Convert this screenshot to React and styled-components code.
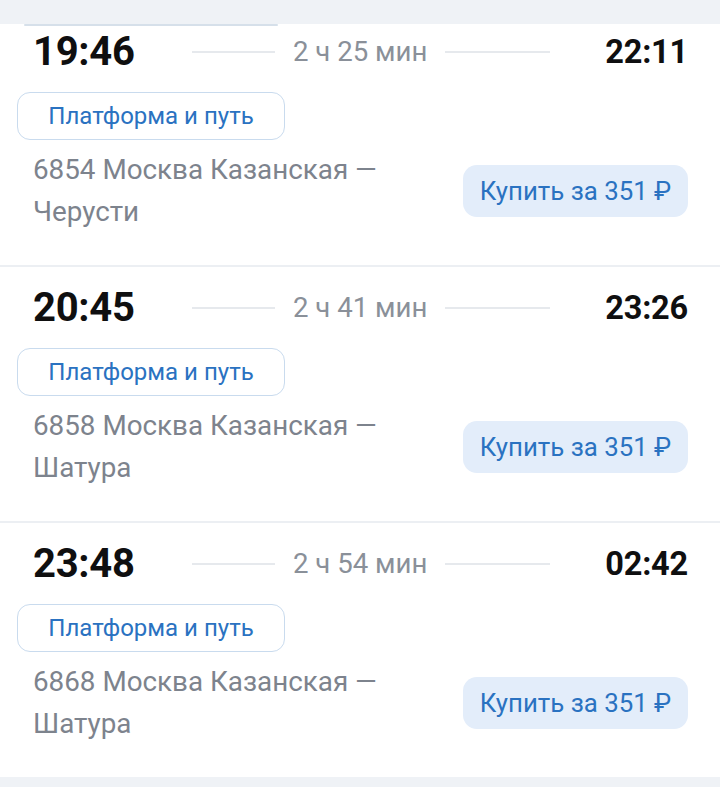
import React from "react";
import styled, { createGlobalStyle } from "styled-components";

const Global = createGlobalStyle`
  html, body { margin: 0; padding: 0; background: #eff2f6; }
  body { font-family: Roboto, "Noto Sans", "Liberation Sans", sans-serif; -webkit-font-smoothing: antialiased; }
  * { box-sizing: border-box; }
`;

const Page = styled.div`
  width: 720px;
  height: 787px;
  overflow: hidden;
  background: #eff2f6;
  display: flex;
  flex-direction: column;
`;

const Header = styled.div`
  position: relative;
  height: 24px;
  flex: none;
  background: #eff2f6;
  z-index: 2;
`;

const HeaderIndicator = styled.div`
  position: absolute;
  left: 24px;
  bottom: -2px;
  width: 254px;
  height: 2px;
  border-radius: 1px;
  background: #d6e0ea;
`;

const List = styled.div`
  display: flex;
  flex-direction: column;
  gap: 2px;
  background: #eceff3;
`;

const Card = styled.div`
  background: #ffffff;
  padding: ${(p) => (p.$cut ? "4px" : "17px")} 32px 32px 0;
  display: flex;
  flex-direction: column;
`;

const TimeRow = styled.div`
  display: flex;
  align-items: center;
  height: 48px;
  padding-left: 33px;
`;

const DepTime = styled.div`
  flex: none;
  width: 159px;
  font-size: 40px;
  line-height: 48px;
  font-weight: 700;
  color: #0f0f10;
  letter-spacing: -0.3px;
`;

const Line = styled.div`
  height: 2px;
  background: #e6e9ed;
  ${(p) => (p.$grow ? "flex: 1;" : "flex: none; width: 83px;")}
`;

const Duration = styled.div`
  flex: none;
  padding: 0 18px;
  font-size: 27.6px;
  line-height: 48px;
  color: #8a9099;
`;

const ArrTime = styled.div`
  flex: none;
  margin-left: 55px;
  font-size: 32.5px;
  line-height: 48px;
  font-weight: 700;
  color: #0f0f10;
  letter-spacing: -0.2px;
`;

const PlatformButton = styled.button`
  margin: 16px 0 0 17px;
  width: 268px;
  height: 48px;
  border: 1.5px solid #c9dbee;
  border-radius: 13px;
  background: #ffffff;
  color: #2a72c1;
  font-family: inherit;
  font-size: 24px;
  padding: 0;
  text-align: center;
  cursor: pointer;
`;

const Bottom = styled.div`
  margin-top: 9px;
  display: flex;
  align-items: center;
  justify-content: space-between;
  padding-left: 33px;
`;

const Route = styled.div`
  width: 390px;
  font-size: 27.8px;
  line-height: 42px;
  color: #7d838d;
`;

const BuyButton = styled.button`
  width: 225px;
  height: 52px;
  border: none;
  border-radius: 14px;
  background: #e3edfa;
  color: #2a72c1;
  font-family: inherit;
  font-size: 25.8px;
  padding: 0;
  cursor: pointer;
`;

const Tail = styled.div`
  flex: 1;
  background: #eff2f6;
`;

const trains = [
  { dep: "19:46", dur: "2 ч 25 мин", arr: "22:11", num: "6854", to: "Черусти" },
  { dep: "20:45", dur: "2 ч 41 мин", arr: "23:26", num: "6858", to: "Шатура" },
  { dep: "23:48", dur: "2 ч 54 мин", arr: "02:42", num: "6868", to: "Шатура" },
];

export default function App() {
  return (
    <Page>
      <Global />
      <Header>
        <HeaderIndicator />
      </Header>
      <List>
        {trains.map((t, i) => (
          <Card key={t.num} $cut={i === 0}>
            <TimeRow>
              <DepTime>{t.dep}</DepTime>
              <Line />
              <Duration>{t.dur}</Duration>
              <Line $grow />
              <ArrTime>{t.arr}</ArrTime>
            </TimeRow>
            <PlatformButton>Платформа и путь</PlatformButton>
            <Bottom>
              <Route>
                {t.num} Москва Казанская —<br />
                {t.to}
              </Route>
              <BuyButton>Купить за 351 ₽</BuyButton>
            </Bottom>
          </Card>
        ))}
      </List>
      <Tail />
    </Page>
  );
}
